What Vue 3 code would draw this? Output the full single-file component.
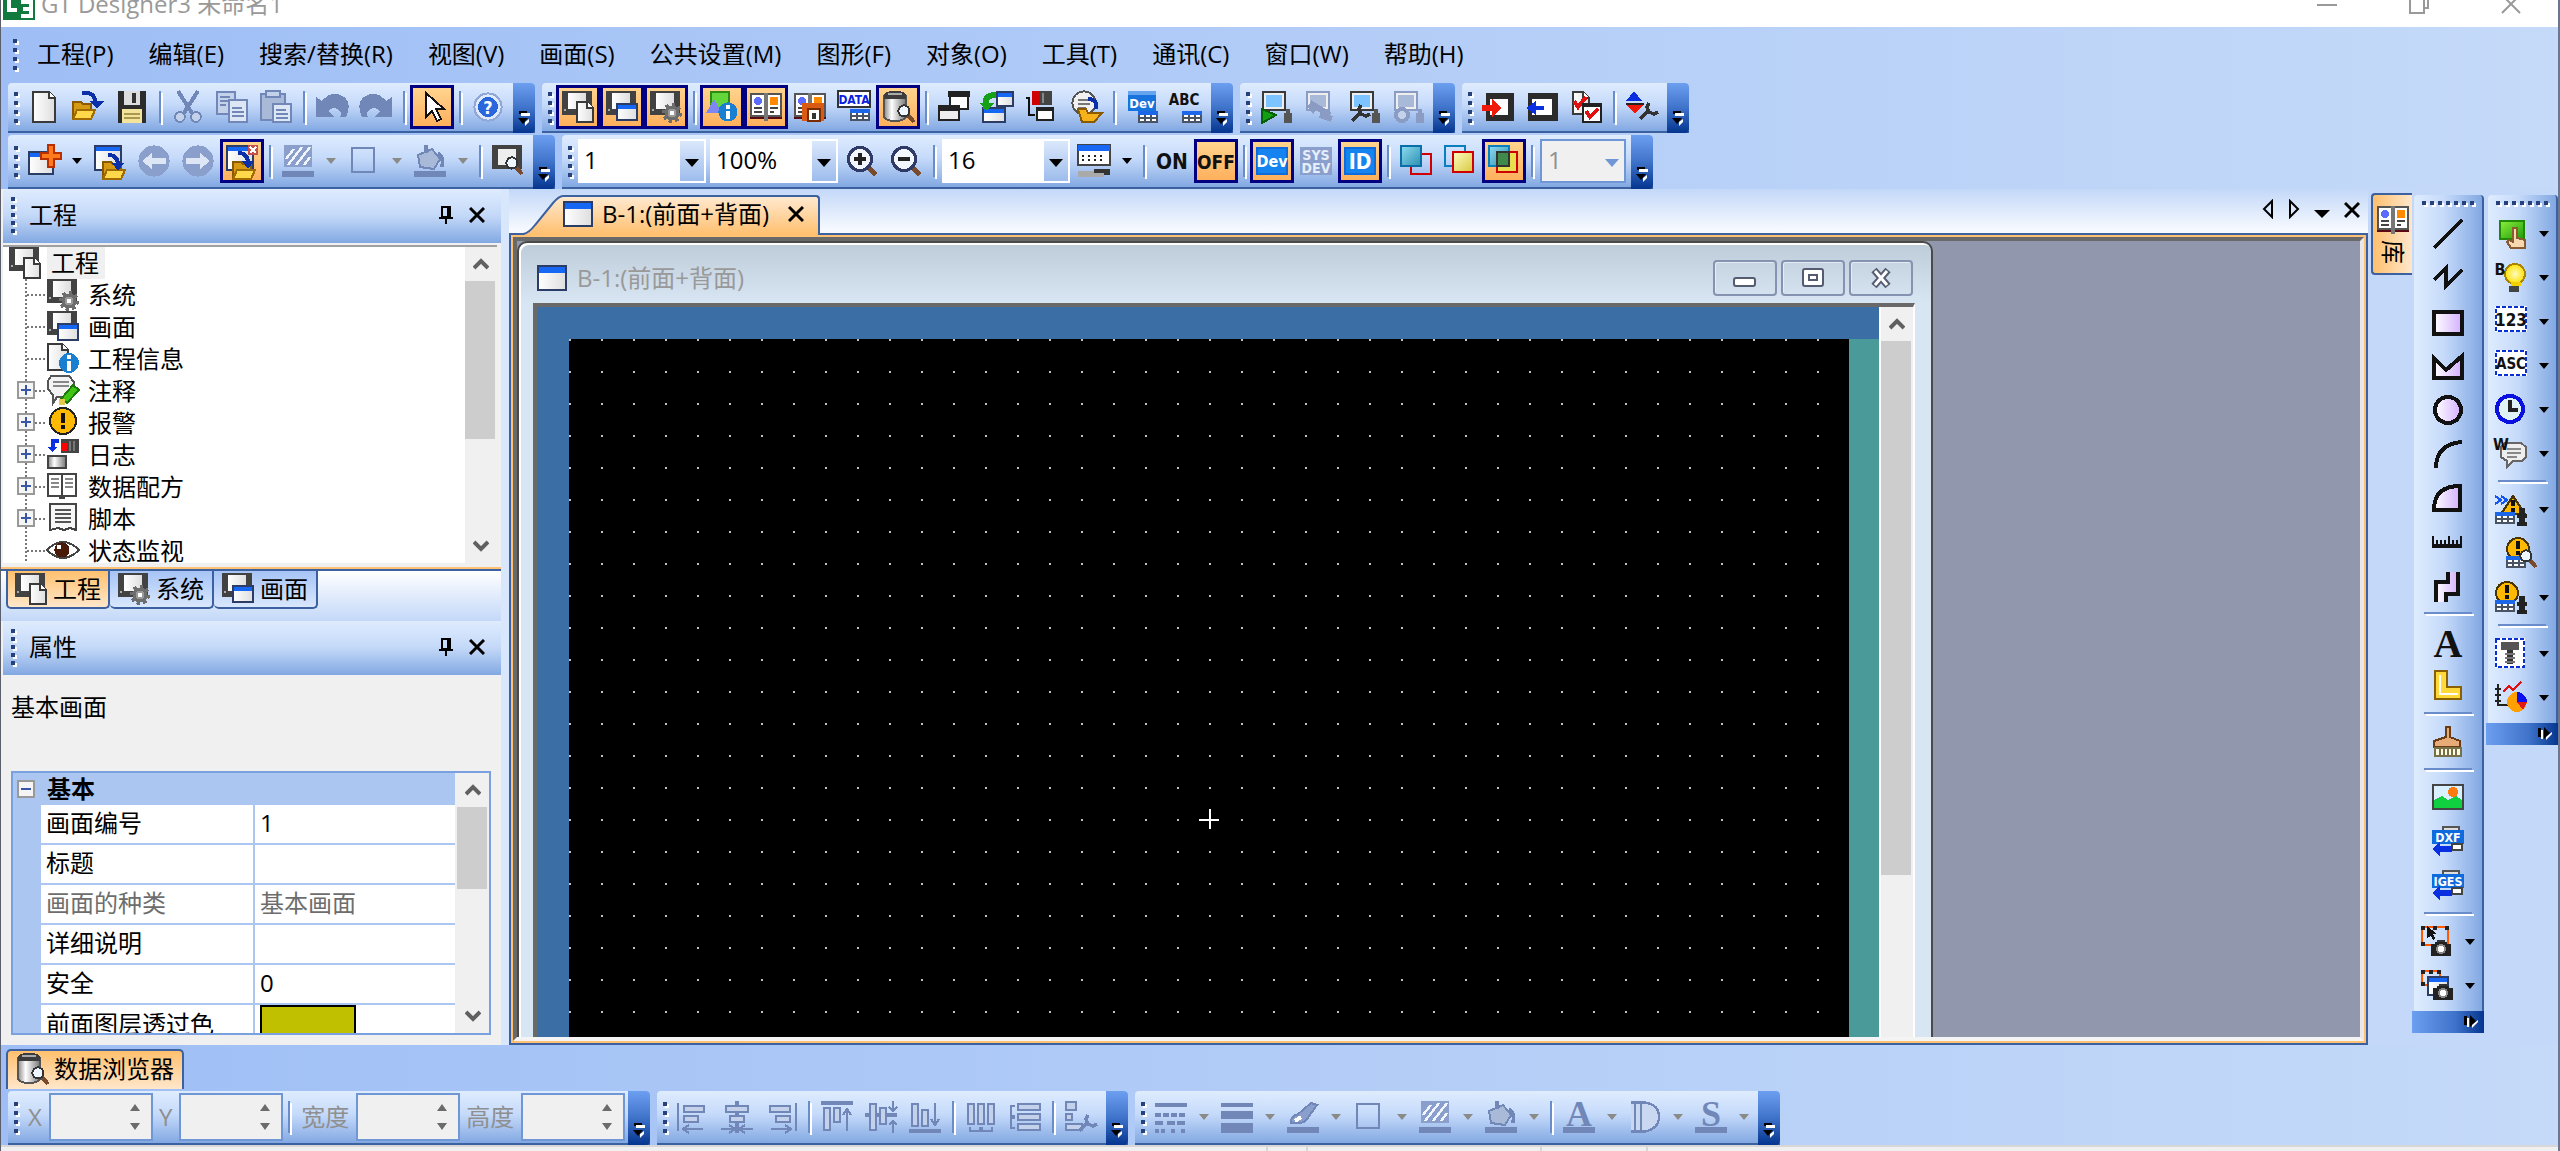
<script setup>
import { h } from 'vue'

/* ---------- icon drawing helpers, 16 x 16 grid ---------- */
const r = (x, y, w, ht, f, s = '') =>
  `<rect x="${x}" y="${y}" width="${w}" height="${ht}" fill="${f}"${s ? ` stroke="${s}"` : ''}/>`
const p = (d, f = 'none', s = '', w = 1) =>
  `<path d="${d}" fill="${f}"${s ? ` stroke="${s}" stroke-width="${w}"` : ''}/>`
const c = (x, y, rad, f, s = '', w = 1) =>
  `<circle cx="${x}" cy="${y}" r="${rad}" fill="${f}"${s ? ` stroke="${s}" stroke-width="${w}"` : ''}/>`
const t = (x, y, size, txt, f = '#111', fam = 'Liberation Sans Narrow, DejaVu Sans Condensed, sans-serif', wt = 700) =>
  `<text x="${x}" y="${y}" font-size="${size}" font-family="${fam}" font-weight="${wt}" fill="${f}" text-anchor="middle">${txt}</text>`

const D = '#7087b8'
const L = '#c3d2ea'
const K = '#3a3a3a'

const page = (x, y, w = 8, ht = 10) =>
  p(`M${x} ${y}h${w - 3}l3 3v${ht - 3}h-${w}z`, 'url(#gw)', K) + p(`M${x + w - 3} ${y}v3h3`, '#fff', K)
const scr = r(0, 0, 15, 12, '#424242') + r(3, 1, 9, 8, 'url(#gw)') + r(1, 9, 1, 1, '#aaa')
const win = (x, y, w, ht) =>
  r(x + 0.5, y + 0.5, w - 1, ht - 1, 'url(#gw)', '#2b3d66') + r(x + 1, y + 1, w - 2, 2, '#1767f5')
const gear = (x, y, k = '#6d6d6d') =>
  `<circle cx="${x}" cy="${y}" r="4" fill="none" stroke="${k}" stroke-width="2" stroke-dasharray="1.6 1.5"/>` +
  c(x, y, 3, '#999', k, 1.5) + c(x, y, 1.2, '#fff')
const glass = (x, y, f = '#eef6ff') =>
  p(`M${x + 2} ${y + 2}l3 3.5`, 'none', '#7a4a2c', 2) + c(x, y, 2.8, f, '#333')
const folder = (x, y) =>
  p(`M${x} ${y}h4l1 1h4v7h-9z`, '#d69a12', '#8a5a00') + p(`M${x + 2} ${y + 4}h9l-2 4.5h-9z`, '#ffd94a', '#a06c00')
const curve = (x, y) => p(`M${x} ${y}q5 0 5 5`, 'none', '#0a2fa8', 2) + p(`M${x + 2} ${y + 4}h6l-3 4z`, '#0a2fa8')
const book = (a, b) =>
  p('M.5 1.500h7v11h-7zM8.500 1.500h7v11h-7z', '#fff', '#555') + r(0, 13, 16, 1, '#5a0a12') + r(7, 1, 2, 14, '#777') +
  c(4, 5, 2, a) + r(10, 3, 4, 4, b) + r(2, 8, 4, 1, '#444') + r(2, 10, 4, 1, '#444') + r(10, 8, 4, 1, '#444') + r(10, 10, 2, 1, '#444')
const calc = (x, y) =>
  r(x, y, 10, 6, '#4a5364') + r(x, y, 10, 2, '#1c66e8') +
  [0, 3, 6].map(i => r(x + 1 + i, y + 2, 2, 1, '#fff') + r(x + 1 + i, y + 4, 2, 1, '#fff')).join('')
const wrench = (x, y, k = '#333') =>
  p(`M${x} ${y + 8}l4.500-4.500`, 'none', k, 2) + p(`M${x + 4.5} ${y}l-1 2 1 2.500 2.500 1 2-1`, 'none', k, 1.6)
const plug = (k = '#555') => r(12, 11, 4, 5, k) + r(13, 9, 2, 2, k)
const monitor = (f, k) => r(1.5, 0.5, 11, 9, '#eee', k) + r(3, 2, 8, 6, f)
const hatch = r(1, 0, 14, 11, '#8b9fcc') + p('M3 10l7-9M7 10l7-9M2 7l4-5M11 10l3-4', 'none', '#f0f5ff', 1.2)
const bar = r(0, 13, 16, 3, D)
const bucket = p('M2 5l7-3 4 5-3 5-7-1z', '#a9b9d8', D) + p('M6 4v-4M12 4q3 2 2 7', 'none', D, 1.8)
const magnify = sign =>
  p('M11 11l4 4', 'none', '#7a4a2c', 2.5) + c(7, 7, 5.8, '#f2f6ff', '#2f3a66', 1.6) + r(4, 6, 6, 2, '#222') + (sign ? r(6, 4, 2, 6, '#222') : '')
const man = r(12, 7, 3, 3, '#222') + r(11, 10, 5, 2, '#222') + r(12, 12, 3, 2, '#222') + r(11, 14, 5, 2, '#222')
const layer = (x, y, f, s) => r(x + 0.5, y + 0.5, 10, 10, f, s)
const dashbox = (w, ht) =>
  r(0, 0, w, ht, '#fff') +
  `<rect x="0.5" y="0.5" width="${w - 1}" height="${ht - 1}" fill="none" stroke="#0a2fd0" stroke-dasharray="2 1"/>`
const bang = (x, y) => c(x, y, 5.5, '#ffb900', '#4a3400') + r(x - 1, y - 4, 2, 4, '#111') + r(x - 1, y + 1, 2, 2, '#111')
const camera = (x, y) => r(x, y + 2, 10, 6, '#222') + r(x + 2, y + 1, 6, 1, '#222') + r(x + 3, y, 4, 1, '#333') + c(x + 5, y + 4.5, 2, '#fff', '#888')
const fileTag = txt =>
  r(5.5, 0.5, 8, 4, '#ddd', '#555') + r(0, 2, 16, 7, '#0d6bdd') + t(8, 7.800, 6.200, txt, '#fff') +
  r(10, 9, 5, 3, '#fff', '#444') + p('M0 11.500l4-3.500v2h6v3H4v2z', '#0a2fe0')
const al = {
  v: x => r(x, 1, 1, 14, D),
  b: (x, y, w, ht) => r(x + 0.5, y + 0.5, w, ht, L, D)
}

const icons = {
  logo: r(0, 0, 16, 16, '#117a3e') + r(2, 2, 2, 10, '#fff') + r(2, 10, 5, 2, '#fff') + r(6, 3, 5, 2, '#fff') +
    p('M9 7h5v7H9M10 10.500h4', 'none', '#fff', 1.6),
  fresh: page(2.5, 0.5, 11, 15),
  open: folder(0.5, 5.5) + p('M5 1q6-1 7 5', 'none', '#0a2fa8', 2) + p('M9 5h7l-3.500 4z', '#0a2fa8'),
  save: r(1, 0, 14, 16, '#2c2c2c') + r(4, 0, 8, 7, '#ddd') + r(8, 1, 2, 5, '#333') + r(3, 9, 10, 7, '#f3e39b') + r(4, 11, 8, 1, '#a89850') + r(4, 13, 8, 1, '#a89850'),
  cut: p('M3 0l7 11M13 0L6 11', 'none', D, 2) + c(4, 13, 2.4, L, D) + c(12, 13, 2.4, L, D),
  copy: r(0.500, 0.500, 9, 11, L, D) + p('M2 3h5M2 5h5M2 7h3', 'none', D) + r(6.500, 4.500, 9, 11, '#dce6f5', D) + p('M8 8.500h5M8 10.500h6M8 12.500h6', 'none', D),
  paste: r(0.500, 1.500, 12, 13, '#a9b9d8', D) + r(3, 0, 7, 3, L, D) + r(6.500, 6.500, 9, 9, '#dce6f5', D) + p('M8 9.500h5M8 11.500h6M8 13.500h6', 'none', D),
  undo: p('M0 3v10h9l-3-3q3-3 6 0 1 1 0 3h3q3-7-1-10-6-4-11 2z', D),
  redo: p('M16 3v10H7l3-3q-3-3-6 0-1 1 0 3H1q-3-7 1-10 6-4 11 2z', D),
  pointer: p('M5 1v12l3-3 2.500 5 2-1-2.500-5h4z', '#fff', '#111'),
  help: c(8, 8, 6.8, '#dfeafc', '#8fa6d6') + c(8, 8, 5, '#2a66dc') + t(8, 11.500, 9, '?', '#fff'),
  project: scr + page(7.5, 5.5, 8, 10),
  screen: scr + win(5, 6, 11, 9),
  system: scr + gear(11, 11),
  shape: r(2.500, 0.500, 9, 8, '#63d63c', '#2d8a14') + p('M0 11l4-7 4 7z', '#7d86f2') + c(11, 10.500, 4.800, '#1a7fd0') + r(10, 7, 2, 2, '#fff') + r(10, 10, 2, 4, '#fff'),
  book: book('#5c6cff', '#ff8a00'),
  bookcase: book('#5c6cff', '#ff8a00') + r(4, 6, 11, 9, '#d95a12') + r(7, 9, 6, 6, '#fff', '#7a2c00') + r(9, 11, 2, 3, '#333'),
  data: r(0, 0, 16, 8, '#fff', '#333') + t(8, 6.300, 6, 'DATA', '#0a1fe0') + calc(6, 9),
  dbsearch: p('M1 3q0-2.500 5.500-2.500T12 3v10q-1 2-5.500 2T1 13z', 'url(#gcyl)', '#555') + p('M1 2q0-2 5.500-2T12 2v2H1z', '#3c3c3c') + r(3, 1, 7, 1, '#aaa') + glass(11, 10),
  cascade: r(6, 1, 9, 8, '#fff', '#222') + r(5, 0, 11, 3, '#222') + r(0.500, 8.500, 10, 6, '#eee', '#222') + r(0, 7, 11, 3, '#222'),
  jump: win(7, 0, 9, 8) + win(0, 8, 12, 8) + p('M2 9V5q0-3 5-3', 'none', '#16a018', 3) + p('M-1 6h7l-3.500 4z', '#16a018'),
  relation: r(3, 0, 4, 7, '#d00000') + r(7, 0, 6, 7, '#444') + r(8, 1, 1, 5, '#888') + r(0, 3, 2, 1, '#111') + p('M1.500 3v9h3', 'none', '#111') + r(5.500, 9.500, 8, 5, '#fff', '#222') + r(5, 8, 9, 2, '#222'),
  scriptgo: c(7, 6, 5.800, '#f1f1f1', '#555') + p('M4 4.500h6M4 6.500h6M4 8.500h4', 'none', '#777') + p('M9 4q5 0 4 5', 'none', '#0a2fa8', 2) + p('M4 9h4l1 2h7l-4 4.500H6z', '#f5b21a', '#8a5a00'),
  devtable: r(1, 0, 14, 10, '#1973dc') + r(1, 0, 14, 2, '#67a4ee') + t(8, 8.500, 6.500, 'Dev', '#fff') + calc(6, 10),
  abctable: t(7, 7, 7.500, 'ABC', '#111') + calc(6, 10),
  simrun: monitor('#7cc4ff', K) + p('M1 9v7l7-4z', '#12a012', '#066006') + plug(),
  simoff: monitor('#a9b9d8', '#8b9cc4') + p('M3 6l10 6M8 12l6 2', 'none', '#8b9cc4', 3) + p('M5 12l-4-5h5z', '#8b9cc4'),
  simtool: monitor('#7cc4ff', K) + wrench(2, 7) + plug(),
  simset: monitor('#a9b9d8', '#8b9cc4') + c(5, 12, 3, L, '#8b9cc4', 2) + plug('#8b9cc4'),
  inbox: r(2, 1, 14, 14, '#2b2b2b') + r(4, 4, 9, 8, '#fff') + p('M0 7h5V4l5 4.500L5 13v-3H0z', '#f01808'),
  outbox: r(1, 1, 15, 14, '#2b2b2b') + r(3, 4, 10, 8, '#fff') + p('M9 7.500H5V5L0 8.500 5 12V9.500h4z', '#0a2fe0'),
  check: page(1.5, 0.5, 8, 11) + p('M2 5l2 3 4-5', 'none', '#e01010', 2) + r(6.500, 7.500, 9, 8, '#fff', '#222') + r(6, 6, 10, 2, '#222') + p('M8 10l2 3 4-4', 'none', '#e01010', 2),
  transfer: p('M0 5l4-5 4 5z', '#0a2fe0') + r(0, 6, 9, 1, '#222') + p('M0 7h9L4.500 11z', '#f01808') + wrench(7, 6),
  newscr: win(0, 3, 13, 12) + p('M10 0h3v4h3.500v3H13v4h-3V7H6.500V4H10z', '#ff7a1a', '#b83000'),
  openscr: win(0, 0, 14, 13) + folder(4.5, 8.5) + curve(7, 5),
  back: c(8, 8, 7.800, '#8b9fcc') + p('M2 8l5-4v2.500h7v3H7V12z', '#dce6f5'),
  fwd: c(8, 8, 7.800, '#8b9fcc') + p('M14 8L9 4v2.500H2v3h7V12z', '#dce6f5'),
  closescr: win(0, 0, 14, 13) + folder(3.5, 8.5) + curve(6, 4) + r(11, 0, 5, 5, '#c8504c') + p('M12 1l3 3M15 1l-3 3', 'none', '#fff'),
  hatch: hatch + bar,
  square: r(2, 1.500, 11, 12, 'none', D),
  bucket: bucket + bar,
  preview: r(0, 0, 15, 12, '#424242') + r(3, 2, 9, 8, '#eee') + glass(10, 9),
  zoomin: magnify(true),
  zoomout: magnify(false),
  keypad: r(0, 0, 16, 10, '#fff', '#444') + r(0, 0, 16, 3, '#1767f5') + [5, 7].map(y => [2, 5, 8, 11].map(x => r(x, y, 1, 1, '#222')).join('')).join('') + r(0, 13, 13, 3, '#aaa') + p('M8 12h8v3h-3v-1H8z', '#333'),
  on: t(8, 12, 10.500, 'ON'),
  off: t(8, 12, 9.500, 'OFF'),
  dev: r(0, 1, 16, 14, '#0d6bdd') + r(1, 2, 14, 12, '#1583f0') + t(8, 11, 8, 'Dev', '#fff'),
  sysdev: r(0, 1, 16, 14, '#8b9fcc') + t(8, 7.500, 7, 'SYS', '#e6eefa') + t(8, 14, 7, 'DEV', '#e6eefa'),
  id: r(0, 1, 16, 14, '#0d6bdd') + r(1, 2, 14, 12, '#1583f0') + t(8, 12, 10.500, 'ID', '#fff'),
  layer1: layer(5, 4, 'none', '#d00000') + layer(0, 0, 'url(#gcy)', '#0a6fa8') + layer(0, 0, 'none', '#0a6fa8'),
  layer2: layer(0, 0, 'none', '#0a7fc0') + layer(4, 3, 'url(#gye)', '#d00000'),
  layer3: layer(4, 3, '#e8df50', '#d00000') + layer(0, 0, 'url(#gcy)', '#0a7fc0') + r(4.500, 3.500, 6, 7, '#3f8a4a', '#333'),
  info: page(0.5, 0.5, 10, 13) + c(11, 10, 5, '#1a7fd0') + r(10, 6, 2, 2, '#fff') + r(10, 9, 2, 5, '#fff'),
  comment: p('M2 .5h9l2.500 3v4L10 11H5l-2 3v-4L.5 7V3z', '#f3f3f3', '#555') + p('M3 3.500h8M3 5.500h8', 'none', '#888') + p('M7 12l6-7 3 2.500-6 6.500z', '#3fc414', '#1d7a08') + r(6, 12, 3, 3, '#e8c84a'),
  alarm: c(8, 7, 6.500, '#ffb900', '#222') + r(7, 3, 2, 5, '#111') + r(7, 9, 2, 2, '#111'),
  log: p('M2 0h4v2H4v2h1L2.500 6.500 0 4h2z', '#0a2fe0') + r(7, 0, 9, 7, '#444') + r(7, 2, 3, 4, '#f00') + r(11, 1, 1, 5, '#777') + r(13, 1, 1, 5, '#777') + r(0.500, 8.500, 9, 6, 'url(#gcyl)', '#444'),
  recipe: p('M.5 1.500h7v11h-7zM7.500 1.500h7v11h-7z', '#fff', '#444') + p('M2 4h4M2 6h4M2 8h4M9 4h4M9 6h4M9 8h4', 'none', '#888') + r(6, 12, 3, 2, '#444'),
  script: p('M1.500.5h13v13l-3-1-3 1-3-1-4 1z', '#f7f7f7', '#444') + p('M4 3.500h8M4 5.500h8M4 7.500h8M4 9.500h8', 'none', '#555'),
  eye: p('M0 7.500q8-8 16 0-8 8-16 0z', '#fff', '#444') + c(7.500, 7.500, 3.800, '#4a1a08') + r(5, 5, 2, 2, '#fff'),
  line: p('M1 15L15 1', 'none', '#111', 2),
  poly: p('M1 9l6-6v9l8-8', 'none', '#111', 2),
  rect: `<rect x="1" y="3" width="14" height="11" fill="url(#gvi)" stroke="#111" stroke-width="2"/>`,
  polygon: p('M1 14V4l6 6 8-7v11z', 'url(#gvi)', '#111', 2),
  circle: c(8, 8, 6.500, 'url(#gvi)', '#111', 2),
  arc: p('M2 15Q2 3 15 2', 'none', '#111', 2),
  sector: p('M1 14Q1 2 14 2v12z', 'url(#gvi)', '#111', 2),
  ruler: r(0, 9, 15, 2, '#111') + r(0, 5, 1, 5, '#111') + r(14, 5, 1, 5, '#111') + r(8, 5, 1, 5, '#111') + [2, 4, 6, 10, 12].map(x => r(x, 7, 1, 3, '#111')).join(''),
  pipe: p('M8 1v5H2v10h5v-4h6V1z', 'url(#gvi)') + p('M8 1v5H2v10M13 1v11H7v4', 'none', '#111', 2),
  text: t(8, 15.500, 20, 'A', '#111', 'Liberation Serif, serif'),
  ell: p('M1.500.500h6v8h7v6h-13z', '#ffd93a', '#8a5f00') + p('M4 2.500v9.500h9', 'none', '#fff', 1),
  brush: p('M7 .500h2v5l5 2v3H1v-3l6-2z', '#e6ab77', '#6a3c14') + r(1.500, 11, 13, 4, '#fffbe0', '#76704a') + p('M4 11v4M6 11v4M8 11v4M10 11v4M12 11v4', 'none', '#76704a'),
  picture: r(0.500, 1.500, 15, 12, '#d8f0ff', '#444') + c(10.500, 5, 2.500, '#ff7a10') + p('M1 13v-4l4-2 3 2 4-2 3 2v4z', '#10d040'),
  dxf: fileTag('DXF'),
  iges: fileTag('IGES'),
  snap: `<rect x=".5" y=".5" width="13" height="9" fill="none" stroke="#ff5a00"/>` + r(0, 0, 2, 2, '#222') + r(6, 0, 2, 2, '#222') + r(12, 0, 2, 2, '#222') + r(0, 8, 2, 2, '#222') + p('M3 0v6l2-1 1 2 1-1-1-2h2z', '#111') + camera(5, 7),
  snap2: `<rect x=".5" y=".5" width="9" height="7" fill="none" stroke="#ff5a00"/>` + win(3, 3, 11, 10) + r(0, 0, 2, 2, '#222') + r(4, 0, 2, 2, '#222') + r(8, 0, 2, 2, '#222') + r(0, 6, 2, 2, '#222') + camera(6, 7),
  switch: r(2.500, 1.500, 12, 9, 'url(#ggr)', '#1f8a08') + p('M8 15l-2-3 1-1 2 1V5h2v5l4 1v4z', '#f8d8b0', '#8a5a30'),
  lamp: c(10, 6, 5, 'url(#gye2)', '#a88400') + r(8, 10, 5, 2, '#f0d000') + r(7, 12, 5, 3, '#444') + t(2.500, 6.500, 8, 'B', '#111'),
  num: dashbox(16, 13) + t(8, 10, 8.500, '123'),
  asc: dashbox(16, 13) + t(8, 9.500, 7.500, 'ASC'),
  clock: c(7.500, 7.500, 6.500, '#e0f4f8', '#0a10e0', 2) + p('M7.500 3v5h4', 'none', '#222', 1.600),
  wcomment: p('M5 2.500h8l2.500 2v5l-2 2H9l-3 3v-3l-3-2v-5z', '#eee', '#666') + p('M6 5.500h7M6 7.500h7M6 9.500h5', 'none', '#888') + t(3, 6, 8, 'W', '#111'),
  alarmgo: p('M9 1l6 9H3z', '#ffb900', '#4a3400') + r(8, 3, 2, 3, '#111') + r(8, 7, 2, 2, '#111') + p('M0 1l3 2-3 2M3 1l3 2-3 2', 'none', '#1457f0') + calc(0, 9) + man,
  alarmfind: bang(6, 5.500) + calc(0, 9) + glass(10, 9),
  alarmuser: bang(6, 5.500) + calc(0, 9) + man,
  bolt: dashbox(15, 15) + r(3, 2, 9, 4, '#555') + r(6, 6, 3, 7, '#333') + p('M5 8h5M5 10h5M5 12h5', 'none', '#777'),
  chart: p('M1.500 1v10.500h5M0 3.500h3M0 6.500h3M0 9.500h3', 'none', '#222') + p('M4 5l3-3 2 2 4-4', 'none', '#e01010') + c(11, 10, 5, '#ffa000') + p('M11 10V5a5 5 0 0 1 5 5z', '#0a10f0') + p('M11 10h5l-2 4z', '#e01818'),
  alL: al.v(0) + al.b(3, 2, 10, 3) + al.b(3, 7, 7, 3) + p('M3 14h10M6 12l-3 2 3 2', 'none', D),
  alC: r(7, 0, 2, 16, D) + al.b(2, 2, 11, 3) + al.b(4, 7, 7, 3) + p('M0 14h6M16 14h-6M4 12l3 2-3 2M12 12l-3 2 3 2', 'none', D),
  alR: al.v(15) + al.b(2, 2, 10, 3) + al.b(5, 7, 7, 3) + p('M3 14h10M10 12l3 2-3 2', 'none', D),
  alT: r(0, 0, 16, 2, D) + al.b(1, 3, 3, 11) + al.b(6, 3, 3, 7) + p('M13 15V5M11 7l2-3 2 3', 'none', D),
  alM: r(0, 6, 16, 2, D) + al.b(2, 1, 3, 13) + al.b(7, 3, 3, 8) + p('M14 0v5M14 16v-5M12 3l2 2 2-2M12 12l2-2 2 2', 'none', D),
  alB: r(0, 14, 16, 2, D) + al.b(1, 1, 3, 11) + al.b(6, 4, 3, 8) + p('M13 1v10M11 9l2 3 2-3', 'none', D),
  spH: al.b(1, 1, 3, 10) + al.b(6, 1, 3, 10) + al.b(11, 1, 3, 10) + p('M2.500 13v2h5v-2M8.500 13v2h5v-2', 'none', D),
  spV: al.b(4, 1, 11, 3) + al.b(4, 6, 11, 3) + al.b(4, 11, 11, 3) + p('M3 2.500H1v5h2M3 8.500H1v5h2', 'none', D),
  alSet: al.b(0, 0, 5, 4) + al.b(0, 6, 3, 3) + al.b(0, 11, 8, 3) + wrench(7, 7, D),
  lstyle: r(0, 1, 16, 2, D) + [0, 4, 8, 12].map(x => r(x, 6, 3, 2, D)).join('') + [0, 6, 11].map(x => r(x, 10, 4, 2, D)).join('') + [0, 3, 8, 13].map(x => r(x, 14, 2, 2, D)).join(''),
  lwidth: r(0, 1, 16, 2, D) + r(0, 5, 16, 4, D) + r(0, 11, 16, 5, D),
  pen: p('M2 11q0-4 3-4l7-6 3 1-5 7q-2 3-8 2z', '#8b9fcc', D) + p('M4 10l3-2', 'none', '#fff', 2) + bar,
  fontA: t(8, 12.500, 18, 'A', D, 'Liberation Serif, serif') + bar,
  fontD: p('M1 .800h7q7 1 7 7t-7 7.500H1M3 1v14M6 1v14', '#c9d8f0', D, 1.2),
  fontS: t(8, 12.500, 18, 'S', D, 'Liberation Serif, serif') + bar
}

const Icon = props =>
  h('svg', {
    class: 'ico', viewBox: '0 0 16 16', width: 32, height: 32, 'aria-hidden': 'true',
    'shape-rendering': 'crispEdges', innerHTML: icons[props.n]
  })
Icon.props = ['n']

/* ---------- toolbar data: '|' separator, '*' pressed, '+' with drop-down ---------- */
const parse = s =>
  s.split(' ').map(w => {
    if (w === '|') return { sep: true }
    if (w[0] === '#') {
      const [v, cls] = w.slice(1).split('/')
      return { combo: true, v, cls }
    }
    return { icon: w.replace(/[*+]/g, ''), on: w.includes('*'), dd: w.includes('+') }
  })

const dim = new Set('hatch square bucket lstyle lwidth pen fontA fontD fontS'.split(' '))
const topRows = [
  [
    'fresh open save | cut copy paste | undo redo | pointer* | help',
    'project* screen* system* | shape* book* bookcase data dbsearch* | cascade jump relation scriptgo | devtable abctable',
    'simrun simoff simtool simset',
    'inbox outbox check | transfer'
  ].map(parse),
  [
    'newscr+ openscr back fwd closescr* | hatch+ square+ bucket+ | preview',
    '#1/wide #100%/wide zoomin zoomout | #16/wide keypad+ | on off* | dev* sysdev id* | layer1 layer2 layer3* | #1/narrow'
  ].map(parse)
]
const bottomBars = [
  'alL alC alR | alT alM alB | spH spV | alSet',
  'lstyle+ lwidth+ pen+ square+ hatch+ bucket+ | fontA+ fontD+ fontS+'
].map(parse)
const sideBars = [
  'line poly rect polygon circle arc sector ruler pipe | text ell | brush | picture dxf iges | snap+ snap2+',
  'switch+ lamp+ num+ asc+ clock+ wcomment+ | alarmgo+ alarmfind alarmuser+ | bolt+ chart+'
].map(parse)

const menus = ['工程(P)', '编辑(E)', '搜索/替换(R)', '视图(V)', '画面(S)', '公共设置(M)', '图形(F)', '对象(O)', '工具(T)', '通讯(C)', '窗口(W)', '帮助(H)']
const tree = [
  ['系统', 'system'], ['画面', 'screen'], ['工程信息', 'info'], ['注释', 'comment', 1], ['报警', 'alarm', 1],
  ['日志', 'log', 1], ['数据配方', 'recipe', 1], ['脚本', 'script', 1], ['状态监视', 'eye']
]
const panelTabs = [['工程', 'project'], ['系统', 'system'], ['画面', 'screen']]
const props = [['画面编号', '1'], ['标题', ''], ['画面的种类', '基本画面', 1], ['详细说明', ''], ['安全', '0'], ['前面图层透过色', null]]
const spins = [['X', 'pos-x'], ['Y', 'pos-y'], ['宽度', 'size-w'], ['高度', 'size-h']]
</script>

<template>
  <div class="app">
    <svg class="defs" width="0" height="0" aria-hidden="true">
      <defs>
        <linearGradient id="gw"><stop offset="0" stop-color="#fff" /><stop offset="1" stop-color="#dedede" /></linearGradient>
        <linearGradient id="gcyl"><stop offset="0" stop-color="#888" /><stop offset=".35" stop-color="#fff" /><stop offset="1" stop-color="#777" /></linearGradient>
        <linearGradient id="gcy" x2="1" y2="1"><stop offset="0" stop-color="#8fdcf0" /><stop offset="1" stop-color="#2a8fb0" /></linearGradient>
        <linearGradient id="gye" x2="1" y2="1"><stop offset="0" stop-color="#fffcc0" /><stop offset="1" stop-color="#d8c840" /></linearGradient>
        <radialGradient id="gye2"><stop offset="0" stop-color="#fffcc0" /><stop offset="1" stop-color="#ffe000" /></radialGradient>
        <linearGradient id="gvi"><stop offset="0" stop-color="#fff" /><stop offset="1" stop-color="#d3b0ff" /></linearGradient>
        <linearGradient id="ggr" x2="1" y2="1"><stop offset="0" stop-color="#8cf03c" /><stop offset="1" stop-color="#1f9a08" /></linearGradient>
        <pattern id="dots" width="32" height="32" patternUnits="userSpaceOnUse"><rect width="2" height="2" fill="#c0c0c0" /></pattern>
      </defs>
    </svg>

    <header class="titlebar">
      <Icon n="logo" />
      <h1>GT Designer3 未命名1</h1>
      <div class="winbtns">
        <button aria-label="最小化"><svg width="20" height="24"><path d="M0 5h20" stroke="#999" stroke-width="2" /></svg></button>
        <button aria-label="还原"><svg width="20" height="24"><path d="M1-1h14v14H1zM15 8h4V-4" fill="none" stroke="#999" stroke-width="2" /></svg></button>
        <button aria-label="关闭"><svg width="20" height="24"><path d="M1-5l18 18M19-5L1 13" stroke="#999" stroke-width="2" /></svg></button>
      </div>
    </header>

    <nav class="menubar">
      <span class="grip"><i v-for="n in 4" :key="n"></i></span>
      <button v-for="m in menus" :key="m">{{ m }}</button>
    </nav>

    <div v-for="(row, ri) in topRows" :key="ri" class="tbrow" :class="{ tall: ri === 1 }">
      <div v-for="(bar, bi) in row" :key="bi" class="tb" role="toolbar">
        <span class="grip"><i v-for="n in 4" :key="n"></i></span>
        <template v-for="(it, i) in bar" :key="i">
          <span v-if="it.sep" class="sep"></span>
          <span v-else-if="it.combo" class="combo" :class="it.cls">
            <select :disabled="it.cls === 'narrow'" :aria-label="'选择 ' + it.v"><option>{{ it.v }}</option></select>
            <svg class="drop" width="24" height="40"><path d="M5 18h14l-7 8z" /></svg>
          </span>
          <template v-else>
            <button class="tool" :class="{ on: it.on }" :aria-label="it.icon"><Icon :n="it.icon" /></button>
            <button v-if="it.dd" class="arrow" :class="{ dim: dim.has(it.icon) }" :aria-label="it.icon + ' ▾'"><svg width="10" height="6"><path d="M0 0h10L5 6z" /></svg></button>
          </template>
        </template>
        <button class="more" aria-label="更多"><svg width="14" height="16"><path d="M2 0h8v3H2z" /><path class="w" d="M4 2h9v3H4z" /><path d="M1 7h10l-5 6z" /><path class="w" d="M12 8v3l-4 4V11z" /></svg></button>
      </div>
    </div>

    <main class="work">
      <aside class="left">
        <section class="treepane">
          <header class="phead">
            <span class="grip"><i v-for="n in 5" :key="n"></i></span>
            <h2>工程</h2>
            <button aria-label="固定"><svg width="14" height="18"><path d="M3 1h8v10H3zM9 1v10M0 12h14M7 12v6" fill="none" stroke="#000" stroke-width="2" /></svg></button>
            <button aria-label="关闭"><svg width="16" height="16"><path d="M1 1l14 14M15 1L1 15" stroke="#000" stroke-width="3" /></svg></button>
          </header>
          <div class="treebox">
            <ul class="tree">
              <li class="root"><Icon n="project" /><span>工程</span></li>
              <li v-for="x in tree" :key="x[0]">
                <svg class="twig" width="38" height="32">
                  <path d="M17 0v32M18 16h20" stroke="#777" stroke-width="2" stroke-dasharray="2 2" fill="none" />
                  <template v-if="x[2]">
                    <rect x="9" y="7" width="16" height="16" fill="#f5f5f5" stroke="#999" stroke-width="2" />
                    <path d="M12 15h10M17 10v10" stroke="#3a56a8" stroke-width="2" />
                  </template>
                </svg>
                <Icon :n="x[1]" /><span>{{ x[0] }}</span>
              </li>
            </ul>
            <div class="sbar tsb">
              <svg width="16" height="12"><path d="M1 10l7-7 7 7" /></svg>
              <i></i>
              <svg width="16" height="12"><path d="M1 2l7 7 7-7" /></svg>
            </div>
          </div>
          <div class="ptabs">
            <button v-for="(x, i) in panelTabs" :key="x[0]" :class="{ on: i === 0 }"><Icon :n="x[1]" />{{ x[0] }}</button>
          </div>
        </section>

        <section class="proppane">
          <header class="phead">
            <span class="grip"><i v-for="n in 5" :key="n"></i></span>
            <h2>属性</h2>
            <button aria-label="固定"><svg width="14" height="18"><path d="M3 1h8v10H3zM9 1v10M0 12h14M7 12v6" fill="none" stroke="#000" stroke-width="2" /></svg></button>
            <button aria-label="关闭"><svg width="16" height="16"><path d="M1 1l14 14M15 1L1 15" stroke="#000" stroke-width="3" /></svg></button>
          </header>
          <p class="kind">基本画面</p>
          <div class="grid">
            <table>
              <colgroup><col class="c1" /><col class="c2" /><col /></colgroup>
              <thead>
                <tr>
                  <th class="gut"><svg width="18" height="18"><rect x="1" y="1" width="16" height="16" fill="#f5f5f5" stroke="#999" stroke-width="2" /><path d="M4 9h10" stroke="#3a56a8" stroke-width="2" /></svg></th>
                  <th colspan="2">基本</th>
                </tr>
              </thead>
              <tbody>
                <tr v-for="x in props" :key="x[0]" :class="{ ro: x[2] }">
                  <td class="gut"></td>
                  <td class="name">{{ x[0] }}</td>
                  <td class="val"><i v-if="x[1] === null" class="swatch"></i><template v-else>{{ x[1] }}</template></td>
                </tr>
              </tbody>
            </table>
            <div class="sbar psb">
              <svg width="16" height="12"><path d="M1 10l7-7 7 7" /></svg>
              <i></i>
              <svg width="16" height="12"><path d="M1 2l7 7 7-7" /></svg>
            </div>
          </div>
        </section>
      </aside>

      <section class="docs">
        <div class="dtabs">
          <div class="dtab">
            <svg class="slant" width="40" height="40"><path d="M0 40Q6 38 12 30L30 8Q36 1 40 1V40z" fill="url(#tabfill)" /><path d="M0 39Q6 38 12 30L30 8Q36 1 40 1" fill="none" stroke="#3b61a0" stroke-width="2" />
              <defs><linearGradient id="tabfill" x2="0" y2="1"><stop offset="0" stop-color="#ffe9cf" /><stop offset="1" stop-color="#ffbf6e" /></linearGradient></defs>
            </svg>
            <div class="dtabin">
              <svg width="30" height="26"><rect x="1" y="1" width="28" height="24" fill="url(#gw)" stroke="#2b3d66" stroke-width="2" /><path d="M2 2h26v6H2z" fill="#1767f5" /></svg>
              <span>B-1:(前面+背面)</span>
              <button aria-label="关闭"><svg width="16" height="16"><path d="M1 1l14 14M15 1L1 15" stroke="#000" stroke-width="3" /></svg></button>
            </div>
          </div>
          <div class="dnav">
            <button aria-label="向左"><svg width="12" height="20"><path d="M10 2v16L2 10z" fill="none" stroke="#000" stroke-width="2" /></svg></button>
            <button aria-label="向右"><svg width="12" height="20"><path d="M2 2v16l8-8z" fill="none" stroke="#000" stroke-width="2" /></svg></button>
            <button aria-label="列表"><svg width="16" height="20"><path d="M0 11h16l-8 8z" /></svg></button>
            <button aria-label="关闭"><svg width="16" height="20"><path d="M1 4l14 14M15 4L1 18" stroke="#000" stroke-width="3" /></svg></button>
          </div>
        </div>
        <div class="mdi">
          <div class="mdiin">
            <div class="child">
              <header>
                <svg width="30" height="26"><rect x="1" y="1" width="28" height="24" fill="url(#gw)" stroke="#2b3d66" stroke-width="2" /><path d="M2 2h26v6H2z" fill="#1767f5" /></svg>
                <h3>B-1:(前面+背面)</h3>
                <button aria-label="最小化"><svg width="24" height="22"><rect x="1" y="11" width="21" height="8" fill="#fff" stroke="#555b70" stroke-width="2" rx="2" /></svg></button>
                <button aria-label="最大化"><svg width="24" height="22"><rect x="2" y="2" width="20" height="17" fill="#fff" stroke="#555b70" stroke-width="2" rx="2" /><rect x="8" y="8" width="8" height="5" fill="none" stroke="#555b70" stroke-width="2" /></svg></button>
                <button aria-label="关闭"><svg width="24" height="22"><path d="M5 3l14 16M19 3L5 19" stroke="#555b70" stroke-width="7" /><path d="M6 4l12 14M18 4L6 18" stroke="#fff" stroke-width="3" /></svg></button>
              </header>
              <div class="view">
                <div class="desk">
                  <div class="canvas">
                    <svg width="100%" height="100%"><rect width="100%" height="100%" fill="url(#dots)" /></svg>
                    <svg class="cross" width="20" height="20"><path d="M0 11h20M11 0v20" stroke="#fff" stroke-width="2" /></svg>
                  </div>
                  <div class="teal"></div>
                </div>
                <div class="sbar csb">
                  <svg width="16" height="12"><path d="M1 10l7-7 7 7" /></svg>
                  <i></i>
                </div>
              </div>
            </div>
          </div>
        </div>
      </section>

      <aside class="right">
        <button class="lib"><Icon n="book" /><span>库</span></button>
        <div v-for="(bar, bi) in sideBars" :key="bi" class="vtb" role="toolbar">
          <span class="grip h"><i v-for="n in 7" :key="n"></i></span>
          <template v-for="(it, i) in bar" :key="i">
            <span v-if="it.sep" class="hsep"></span>
            <div v-else class="vrow">
              <button class="tool" :aria-label="it.icon"><Icon :n="it.icon" /></button>
              <button v-if="it.dd" class="arrow" :aria-label="it.icon + ' ▾'"><svg width="10" height="6"><path d="M0 0h10L5 6z" /></svg></button>
            </div>
          </template>
          <button class="vmore" aria-label="更多"><svg width="16" height="14"><path d="M0 1h3v9H0zM6 0v12l6-6z" /><path class="w" d="M3 3h2v9H3zM8 13l6-6v-2l-6 5z" /></svg></button>
        </div>
      </aside>
    </main>

    <div class="dock"><button><Icon n="dbsearch" />数据浏览器</button></div>

    <div class="tbrow tall">
      <div class="tb geo" role="toolbar">
        <span class="grip"><i v-for="n in 4" :key="n"></i></span>
        <template v-for="(s, i) in spins" :key="s[1]">
          <span v-if="i === 2" class="sep"></span>
          <label :for="s[1]">{{ s[0] }}</label>
          <span class="spin">
            <input :id="s[1]" type="text" disabled />
            <svg width="10" height="26"><path d="M5 0l5 7H0zM5 26l5-7H0z" fill="#6b6b6b" /></svg>
          </span>
        </template>
        <button class="more" aria-label="更多"><svg width="14" height="16"><path d="M2 0h8v3H2z" /><path class="w" d="M4 2h9v3H4z" /><path d="M1 7h10l-5 6z" /><path class="w" d="M12 8v3l-4 4V11z" /></svg></button>
      </div>
      <div v-for="(bar, bi) in bottomBars" :key="bi" class="tb" role="toolbar">
        <span class="grip"><i v-for="n in 4" :key="n"></i></span>
        <template v-for="(it, i) in bar" :key="i">
          <span v-if="it.sep" class="sep"></span>
          <template v-else>
            <button class="tool" :aria-label="it.icon"><Icon :n="it.icon" /></button>
            <button v-if="it.dd" class="arrow dim" :aria-label="it.icon + ' ▾'"><svg width="10" height="6"><path d="M0 0h10L5 6z" /></svg></button>
          </template>
        </template>
        <button class="more" aria-label="更多"><svg width="14" height="16"><path d="M2 0h8v3H2z" /><path class="w" d="M4 2h9v3H4z" /><path d="M1 7h10l-5 6z" /><path class="w" d="M12 8v3l-4 4V11z" /></svg></button>
      </div>
    </div>
    <footer class="status"><i></i><i></i><i></i><i></i></footer>
  </div>
</template>

<style>
body { margin: 0; overflow: hidden; }
</style>

<style scoped>
.app {
  height: 100vh; display: flex; flex-direction: column; overflow: hidden; box-sizing: border-box;
  border-left: 1px solid #5a5f6b; border-right: 2px solid #6b7790;
  background: linear-gradient(90deg, #9ebef5, #c5daf9);
  font: 24px/32px "Open Sans", "Noto Sans CJK SC", sans-serif; color: #000;
}
.app * { box-sizing: border-box; }
.defs { position: absolute; }
button { font: inherit; color: inherit; border: 0; background: none; padding: 0; margin: 0; display: flex; align-items: center; justify-content: center; flex: none; }
svg { display: block; flex: none; }
.ico { overflow: visible; }
h1, h2, h3, p, ul { margin: 0; padding: 0; font-size: 24px; font-weight: 400; list-style: none; }

.titlebar { height: 27px; flex: none; background: #fff; display: flex; align-items: flex-end; overflow: hidden; padding: 0 24px 7px 2px; gap: 6px; color: #999; }
.titlebar h1 { flex: 1; line-height: 32px; }
.winbtns { display: flex; gap: 72px; margin-right: 13px; align-self: flex-start; }

.menubar { height: 56px; flex: none; display: flex; align-items: center; gap: 1px; padding: 0 0 2px 12px; }
.menubar .grip { width: 6px; }
.menubar button { padding: 0 17px; height: 44px; }

.grip { flex: none; display: flex; flex-direction: column; gap: 5px; }
.grip i { width: 4px; height: 4px; background: #27417a; box-shadow: 2px 2px #fff; }
.grip.h { flex-direction: row; gap: 4px; justify-content: center; height: 17px; padding-top: 6px; }

.tbrow { display: flex; gap: 7px; padding-left: 7px; height: 52px; flex: none; align-items: flex-start; }
.tbrow.tall { height: 54px; }
.tb { height: 50px; display: flex; align-items: flex-start; padding-left: 14px; position: relative; border-radius: 4px 4px 0 0; border-bottom: 2px solid #3b61a0; background: linear-gradient(#dfecfe, #c5dafa 45%, #82a8e2); }
.tb > * { margin-top: 2px; }
.tall .tb { height: 54px; }
.tall .tb > * { margin-top: 4px; }
.tb > .grip { position: absolute; left: 6px; top: 7px; }
.tb > .more { margin: 0 0 0 3px; }
.tool { width: 44px; height: 44px; }
.tool.on { border: 3px solid #000080; background: linear-gradient(#ffd48e, #ffb05c); }
.arrow { width: 22px; height: 44px; }
.arrow.dim { fill: #8a8a86; }
.sep { width: 12px; height: 44px; flex: none; padding: 6px 0 0 5px; }
.sep::before { content: ""; display: block; width: 2px; height: 32px; background: #6a8ccb; box-shadow: 2px 2px #fff; }
.more { width: 22px; align-self: stretch; align-items: flex-end; padding-bottom: 6px; border-radius: 0 4px 4px 0; background: linear-gradient(#6d9ff0, #3f73ca 50%, #05358f); }
.tb > .more { height: 50px; }
.tall .tb > .more { height: 54px; margin-top: 0; }
.w { fill: #fff; }

.combo { position: relative; display: block; flex: none; height: 44px; margin: 0 2px; }
.combo.wide { width: 128px; }
.combo.narrow { width: 86px; }
select { appearance: none; width: 100%; height: 44px; border: 0; border-radius: 0; background: #fff; font: inherit; color: #000; padding: 0 0 2px 6px; }
.narrow select { border: 2px solid #6f97d6; background: #f0f0f0; color: #8f8f8f; opacity: 1; }
.drop { position: absolute; right: 2px; top: 2px; background: linear-gradient(#dbe8fb, #9dbcec); pointer-events: none; }
.narrow .drop { background: none; fill: #6f97d6; }

.work { flex: 1; min-height: 0; display: flex; background: #d9e7fd; }
.left { width: 500px; flex: none; display: flex; flex-direction: column; margin-right: 8px; }
.phead { height: 54px; flex: none; margin-left: 2px; display: flex; align-items: center; padding: 0 16px 2px 8px; gap: 16px; background: linear-gradient(#dfecfe, #c3d8f8 50%, #82a8e2); }
.phead .grip { gap: 4px; width: 4px; }
.phead h2 { flex: 1; margin-left: -2px; white-space: nowrap; }

.treepane { height: 432px; flex: none; display: flex; flex-direction: column; background: #f0f0f0; }
.treebox { height: 318px; flex: none; margin: 2px 4px 4px 2px; border-top: 2px solid #a0a0a0; background: #fff; display: flex; overflow: hidden; }
.tree { flex: 1; }
.tree li { display: flex; height: 32px; padding-left: 6px; align-items: center; }
.tree span { padding: 0 6px 0 9px; }
.tree .root span { margin-left: 6px; padding: 0 6px 0 4px; background: #f0f0f0; }
.sbar { width: 32px; flex: none; background: #f0f0f0; display: flex; flex-direction: column; align-items: center; }
.sbar path { fill: none; stroke: #606060; stroke-width: 4; }
.sbar i { width: 30px; background: #cdcdcd; margin-right: 2px; }
.sbar svg:first-child { margin: 11px 0; }
.sbar svg:last-child { margin: auto 0 11px; }
.tsb i { height: 158px; }
.ptabs { flex: 1; display: flex; align-items: flex-start; padding: 4px 0 0 5px; background: linear-gradient(#ffc274 2px, #3b61a0 2px, #3b61a0 4px, #fff 4px, #c3d8f8); }
.ptabs button { height: 38px; width: 104px; gap: 6px; border: 2px solid #3b61a0; border-width: 0 2px 2px 0; border-radius: 0 0 5px 5px; background: linear-gradient(#a6c4f6, #d9e7fd); }
.ptabs button.on { border-left-width: 2px; background: linear-gradient(#ffc06e, #ffe7cb); }

.proppane { flex: 1; min-height: 0; display: flex; flex-direction: column; background: #f0f0f0; }
.kind { padding: 16px 10px 48px; }
.proppane .grid { flex: 1; min-height: 0; margin: 0 10px 10px; border: 2px solid #7ba0e0; display: flex; overflow: hidden; align-items: stretch; }
table { flex: 1; border-collapse: separate; border-spacing: 0; table-layout: fixed; width: 442px; height: 272px; background: #fff; }
.c1 { width: 28px; }
.c2 { width: 214px; }
thead tr { height: 32px; background: #aac6f1; }
th { padding: 0 0 0 6px; text-align: left; line-height: 30px; height: 32px; }
.gut { background: #aac6f1; padding: 0 0 0 4px; }
tbody tr { height: 40px; }
td { height: 40px; padding: 0 0 2px 5px; line-height: 34px; border-bottom: 2px solid #aac6f1; white-space: nowrap; }
td.name { border-right: 2px solid #aac6f1; }
.ro { color: #6d6d6d; }
.swatch { display: block; width: 96px; height: 38px; border: 2px solid #000; background: #c0c000; }
.psb { margin-left: 2px; }
.psb i { height: 82px; }

.docs { flex: 1; min-width: 0; display: flex; flex-direction: column; }
.dtabs { height: 44px; flex: none; display: flex; justify-content: space-between; padding: 6px 8px 0 14px; background: linear-gradient(#c3d8f8, #fafcff); }
.dtab { display: flex; position: relative; height: 40px; }
.dtabin { height: 40px; display: flex; align-items: center; gap: 9px; padding: 0 14px 4px 0; border: 2px solid #3b61a0; border-width: 2px 2px 0 0; border-radius: 0 4px 0 0; background: linear-gradient(#ffe9cf, #ffbf6e); }
.dtabin button { margin-left: 10px; }
.dnav { display: flex; align-items: center; gap: 14px; height: 28px; }
.mdi { flex: 1; min-height: 0; border: 2px solid #3b61a0; display: flex; }
.mdiin { flex: 1; position: relative; overflow: hidden; border: 4px solid; border-color: #696969 #e8e8e8 #f4f4f4 #696969; outline: 2px solid #ffc274; margin: 2px; background: #9198ad; }
.child { position: absolute; left: 0; top: 0; width: 1416px; height: 900px; display: flex; flex-direction: column; padding: 0 16px 0 14px; border: 2px solid #4a4a4a; border-radius: 10px 10px 0 0; box-shadow: inset 2px 2px #fff; background: linear-gradient(#becbd9, #d8e5f2 60px); }
.child header { height: 60px; flex: none; display: flex; align-items: center; gap: 4px; padding: 10px 2px 0 4px; color: #999; }
.child h3 { flex: 1; padding-left: 6px; }
.child header button { width: 64px; height: 36px; border: 2px solid #8593b0; border-radius: 4px; box-shadow: inset 1px 1px #e4edf6; }
.view { flex: 1; display: flex; border-top: 4px solid #696969; border-left: 4px solid #696969; border-right: 2px solid #fff; background: #fff; }
.desk { flex: 1; display: flex; padding: 32px 0 0 32px; background: #3a6ea5; }
.canvas { flex: 1; position: relative; background: #000; }
.canvas > svg:first-child { position: absolute; left: 0; top: 0; }
.cross { position: absolute; left: 630px; top: 470px; }
.teal { width: 30px; background: #4a9a9a; }
.csb { margin-left: 2px; }
.csb i { height: 534px; }

.right { flex: none; width: 190px; display: flex; align-items: flex-start; background: #c4d9f9; padding: 6px 0 0 3px; }
.lib { flex-direction: column; width: 41px; height: 82px; margin: -2px 2px 0 0; border: 2px solid #3b61a0; border-right: 0; border-radius: 4px 0 0 4px; background: linear-gradient(90deg, #ffc06e, #ffe7cb); gap: 4px; }
.lib span { writing-mode: vertical-rl; text-orientation: sideways; line-height: 28px; }
.vtb { width: 70px; flex: none; margin-right: 4px; border-right: 2px solid #3b61a0; border-radius: 4px 4px 0 0; background: linear-gradient(90deg, #dfecfe, #c5dafa 45%, #82a8e2); }
.vrow { display: flex; justify-content: center; }
.hsep { display: block; height: 12px; padding: 4px 10px; }
.hsep::before { content: ""; display: block; height: 2px; background: #6a8ccb; box-shadow: 2px 2px #fff; }
.vmore { width: 72px; height: 22px; margin: 3px 0 0 -2px; justify-content: flex-end; padding-right: 4px; background: linear-gradient(90deg, #6d9ff0, #3f73ca 60%, #05358f); }

.dock { height: 46px; flex: none; padding: 4px 0 0 5px; }
.dock button { height: 40px; width: 178px; gap: 6px; padding-bottom: 2px; border: 2px solid #3b61a0; border-bottom: 0; border-radius: 5px 5px 0 0; background: linear-gradient(#ffc06e, #ffe7cb); }
.geo label { color: #8f8f8f; line-height: 44px; padding: 0 7px 0 6px; }
.spin { position: relative; width: 104px; flex: none; height: 48px; }
.tall .tb > .spin { margin-top: 2px; }
.spin input { width: 100%; height: 48px; border: 2px solid #6f97d6; background: #f0f0f0; padding: 0 24px 0 4px; font: inherit; }
.spin svg { position: absolute; right: 13px; top: 11px; }
.status { height: 6px; flex: none; display: flex; background: #f0f0f0; border-top: 2px solid #d7d7d7; padding-left: 48%; }
.status i { border-right: 2px solid #d7d7d7; width: 40px; }
.status i:nth-child(3) { width: 234px; }
.status i:nth-child(4) { width: 106px; }
</style>
